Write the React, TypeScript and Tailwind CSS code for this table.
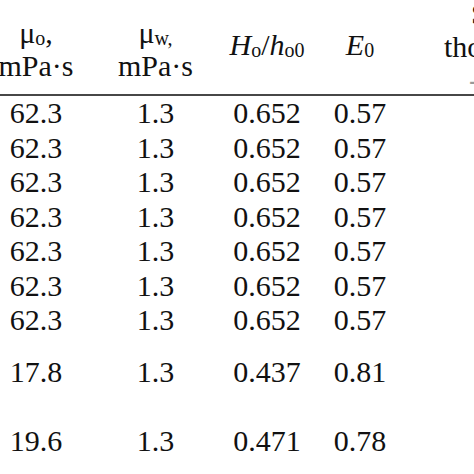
type Row = { muO: string; muW: string; ratio: string; e0: string; tall?: boolean }

const rows: Row[] = [
  { muO: '62.3', muW: '1.3', ratio: '0.652', e0: '0.57' },
  { muO: '62.3', muW: '1.3', ratio: '0.652', e0: '0.57' },
  { muO: '62.3', muW: '1.3', ratio: '0.652', e0: '0.57' },
  { muO: '62.3', muW: '1.3', ratio: '0.652', e0: '0.57' },
  { muO: '62.3', muW: '1.3', ratio: '0.652', e0: '0.57' },
  { muO: '62.3', muW: '1.3', ratio: '0.652', e0: '0.57' },
  { muO: '62.3', muW: '1.3', ratio: '0.652', e0: '0.57' },
  { muO: '17.8', muW: '1.3', ratio: '0.437', e0: '0.81', tall: true },
  { muO: '19.6', muW: '1.3', ratio: '0.471', e0: '0.78', tall: true },
]

// small subscript sitting almost on the baseline, like the source table
function Sub({ children }: { children: React.ReactNode }) {
  return <sub className="text-[20px] bottom-[-2px]">{children}</sub>
}

function Cell({ children, tall }: { children?: React.ReactNode; tall?: boolean }) {
  return (
    <div className={`flex items-center justify-center whitespace-nowrap ${tall ? 'h-[69px]' : 'h-[34.5px]'}`}>
      {children}
    </div>
  )
}

export default function App() {
  return (
    <div className="w-[474px] h-[474px] overflow-hidden bg-white text-[#111] text-[30px] leading-[33px] font-['Liberation_Serif','Times_New_Roman',serif]">
      <div className="w-[585px]">
        {/* table header */}
        <div className="grid grid-cols-[72px_167px_56px_130px_160px] h-[96px] border-b-2 border-[#474747]">
          <div className="flex flex-col items-center pt-[16px] whitespace-nowrap">
            <span>
              μ<Sub>o</Sub>,
            </span>
            <span>mPa·s</span>
          </div>
          <div className="flex flex-col items-center pt-[16px] whitespace-nowrap">
            <span>
              μ<Sub>w,</Sub>
            </span>
            <span>mPa·s</span>
          </div>
          <div className="flex justify-center pt-[28px] whitespace-nowrap">
            <span>
              <i>H</i>
              <Sub>o</Sub>/<i>h</i>
              <Sub>o0</Sub>
            </span>
          </div>
          <div className="flex justify-center pt-[28px] whitespace-nowrap">
            <span>
              <i>E</i>
              <Sub>0</Sub>
            </span>
          </div>
          <div className="flex flex-col -mt-[3px] whitespace-nowrap">
            <span className="pl-[46px]">Sweep</span>
            <span className="pl-[19px]">thorough</span>
            <span className="pl-[44px] text-[#999]">-</span>
          </div>
        </div>

        {/* table body */}
        <div className="grid grid-cols-[72px_167px_56px_130px_160px] leading-[34px]">
          {rows.map((r, i) => (
            <div key={i} className="contents">
              <Cell tall={r.tall}>{r.muO}</Cell>
              <Cell tall={r.tall}>{r.muW}</Cell>
              <Cell tall={r.tall}>{r.ratio}</Cell>
              <Cell tall={r.tall}>{r.e0}</Cell>
              <Cell tall={r.tall} />
            </div>
          ))}
        </div>
      </div>
    </div>
  )
}
